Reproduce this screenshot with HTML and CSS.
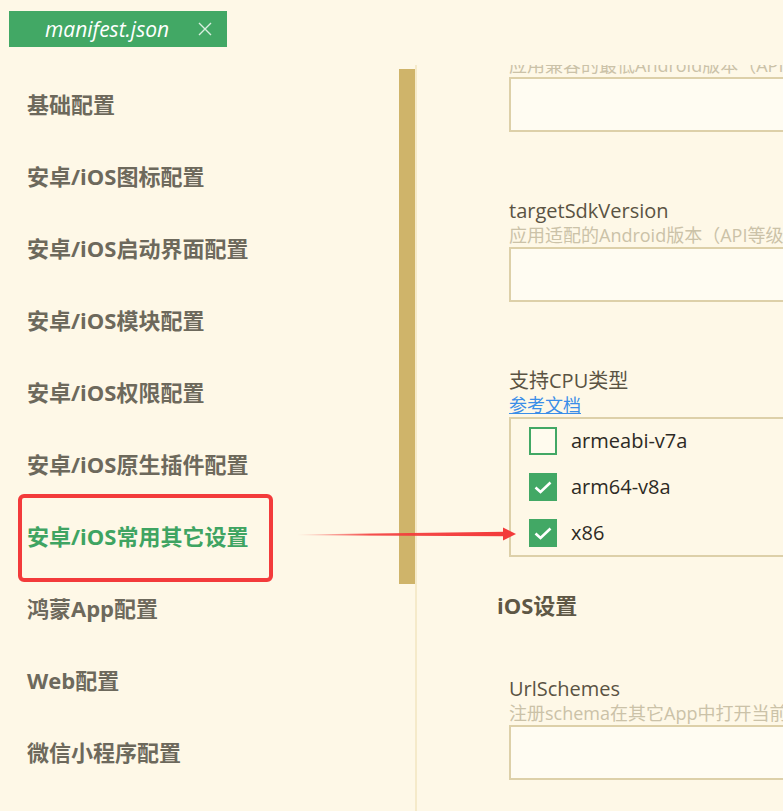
FILE: index.html
```html
<!DOCTYPE html>
<html lang="zh">
<head>
<meta charset="utf-8">
<title>manifest.json</title>
<link rel="stylesheet" href="styles.css">
</head>
<body>
<div class="app">
  <header class="tabbar">
    <div class="tab">
      <span class="tab-name">manifest.json</span>
      <svg class="tab-close" viewBox="0 0 14 14" width="14" height="14"><path d="M1 1L13 13M13 1L1 13" stroke="#d9efe0" stroke-width="1.4" fill="none"/></svg>
    </div>
  </header>
  <div class="main">
    <aside class="sidebar">
      <nav class="nav">
        <div class="nav-item">基础配置</div>
        <div class="nav-item">安卓/iOS图标配置</div>
        <div class="nav-item">安卓/iOS启动界面配置</div>
        <div class="nav-item">安卓/iOS模块配置</div>
        <div class="nav-item">安卓/iOS权限配置</div>
        <div class="nav-item">安卓/iOS原生插件配置</div>
        <div class="nav-item active">安卓/iOS常用其它设置<span class="highlight-box"></span></div>
        <div class="nav-item">鸿蒙App配置</div>
        <div class="nav-item">Web配置</div>
        <div class="nav-item">微信小程序配置</div>
      </nav>
      <div class="scroll-track"><div class="scroll-thumb"></div></div>
    </aside>
    <section class="content">
      <div class="content-inner">
        <div class="field first">
          <div class="field-label">minSdkVersion</div>
          <div class="field-desc">应用兼容的最低Android版本（API等级）</div>
          <div class="input"></div>
        </div>
        <div class="field">
          <div class="field-label">targetSdkVersion</div>
          <div class="field-desc">应用适配的Android版本（API等级）</div>
          <div class="input"></div>
        </div>
        <div class="field">
          <div class="field-label">支持CPU类型</div>
          <div class="field-desc"><a class="doc-link">参考文档</a></div>
          <div class="check-group">
            <div class="check-row"><span class="checkbox"></span><span class="check-label">armeabi-v7a</span></div>
            <div class="check-row"><span class="checkbox checked"><svg viewBox="0 0 28 28" width="28" height="28"><path d="M6.5 14.5L11.5 19L21.5 9.5" stroke="#fff" stroke-width="2.6" fill="none"/></svg></span><span class="check-label">arm64-v8a</span></div>
            <div class="check-row"><span class="checkbox checked"><svg viewBox="0 0 28 28" width="28" height="28"><path d="M6.5 14.5L11.5 19L21.5 9.5" stroke="#fff" stroke-width="2.6" fill="none"/></svg></span><span class="check-label">x86</span></div>
          </div>
        </div>
        <h2 class="section-title">iOS设置</h2>
        <div class="field after-title">
          <div class="field-label">UrlSchemes</div>
          <div class="field-desc">注册schema在其它App中打开当前应用</div>
          <div class="input"></div>
        </div>
      </div>
    </section>
    <svg class="annot-arrow" viewBox="0 0 222 18" width="222" height="18">
      <defs>
        <linearGradient id="fade" x1="0" y1="0" x2="1" y2="0">
          <stop offset="0" stop-color="#f33b3b" stop-opacity="0"/>
          <stop offset="0.35" stop-color="#f33b3b" stop-opacity="0.9"/>
          <stop offset="1" stop-color="#f33b3b"/>
        </linearGradient>
      </defs>
      <polygon points="0,9.6 208,6.8 208,11.2 0,10.2" fill="url(#fade)"/>
      <polygon points="206,2.5 219,9 206,15.5" fill="#f33b3b"/>
    </svg>
  </div>
</div>
</body>
</html>
```
FILE: styles.css
```css
html, body {
  margin: 0;
  padding: 0;
}
body {
  background: #fef8e7;
  font-family: "Open Sans", "Noto Sans CJK SC", sans-serif;
  overflow: hidden;
}
.app {
  width: 783px;
  height: 811px;
  display: flex;
  flex-direction: column;
  overflow: hidden;
}
.tabbar {
  height: 65px;
  flex: none;
  box-sizing: border-box;
  padding: 11px 0 0 9px;
}
.tab {
  width: 218px;
  height: 36px;
  background: #42a865;
  display: flex;
  align-items: center;
  box-sizing: border-box;
  padding-left: 36px;
}
.tab-name {
  color: #ffffff;
  font-style: italic;
  font-size: 21px;
  line-height: 36px;
  flex: 1;
  white-space: nowrap;
}
.tab-close {
  margin-right: 15px;
}
.main {
  flex: 1;
  display: flex;
  position: relative;
  min-height: 0;
}
.sidebar {
  width: 415px;
  flex: none;
  display: flex;
  border-right: 2px solid #f5eaca;
}
.nav {
  flex: 1;
  padding-top: 3px;
  padding-left: 27px;
}
.nav-item {
  position: relative;
  height: 72px;
  line-height: 72px;
  font-size: 22px;
  font-weight: 700;
  color: #6d695c;
  white-space: nowrap;
}
.nav-item.active {
  color: #3fa462;
}
.highlight-box {
  position: absolute;
  left: -9px;
  top: -6px;
  width: 255px;
  height: 88px;
  box-sizing: border-box;
  border: 4px solid #f33b3b;
  border-radius: 6px;
}
.scroll-track {
  width: 16px;
  flex: none;
  padding-top: 4px;
}
.scroll-thumb {
  height: 515px;
  background: #cfb46a;
}
.content {
  flex: 1;
  overflow: hidden;
  min-width: 0;
}
.content-inner {
  margin-top: -36px;
  padding-left: 80px;
}
.field {
  margin-left: 12px;
  width: 520px;
  margin-top: 67px;
}
.field.first {
  margin-top: 0;
}
.field.after-title {
  margin-top: 57px;
}
.field-label {
  font-size: 20px;
  line-height: 24px;
  color: #5a5343;
  white-space: nowrap;
}
.field-desc {
  font-size: 18px;
  line-height: 24px;
  color: #cbc2a8;
  white-space: nowrap;
}
.doc-link {
  color: #3a8ee8;
  text-decoration: underline;
}
.input {
  height: 55px;
  box-sizing: border-box;
  border: 2px solid #ddd0a9;
  background: #fffcf2;
}
.check-group {
  box-sizing: border-box;
  border: 2px solid #ddd0a9;
  padding: 8px 18px;
  display: flex;
  flex-direction: column;
  gap: 18px;
}
.check-row {
  display: flex;
  align-items: center;
  height: 28px;
  gap: 14px;
}
.checkbox {
  width: 28px;
  height: 28px;
  box-sizing: border-box;
  border: 2px solid #42a865;
  background: #fffbee;
  display: block;
}
.checkbox.checked {
  background: #42a865;
  border: none;
}
.checkbox svg {
  display: block;
}
.check-label {
  font-size: 20px;
  color: #2d2a24;
  line-height: 28px;
}
.section-title {
  margin: 33px 0 0 0;
  font-size: 22px;
  line-height: 30px;
  font-weight: 700;
  color: #5e5745;
}
.annot-arrow {
  position: absolute;
  left: 297px;
  top: 460px;
}
```
